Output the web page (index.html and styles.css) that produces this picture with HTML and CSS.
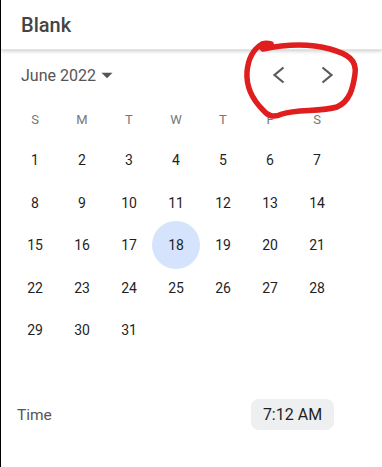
FILE: index.html
```html
<!DOCTYPE html>
<html lang="en">
<head>
<meta charset="utf-8">
<title>Blank</title>
<link rel="stylesheet" href="styles.css">
</head>
<body>
<div class="app">
  <header class="header">Blank</header>
  <div class="month-row">
    <button class="month-btn" type="button">June 2022
      <svg class="drop" width="24" height="24" viewBox="0 0 24 24"><path d="M6.5 9.8l5.5 5.5 5.5-5.5z" fill="#555"/></svg>
    </button>
    <div class="nav">
      <button class="nav-btn" type="button" aria-label="Previous month">
        <svg width="24" height="24" viewBox="0 0 24 24"><polyline points="16.5,4.5 7.5,12 16.5,19.5" fill="none" stroke="#5a5a5a" stroke-width="2.2"/></svg>
      </button>
      <button class="nav-btn" type="button" aria-label="Next month">
        <svg width="24" height="24" viewBox="0 0 24 24"><polyline points="7.5,4.5 16.5,12 7.5,19.5" fill="none" stroke="#5a5a5a" stroke-width="2.2"/></svg>
      </button>
    </div>
  </div>
  <div class="weekdays">
    <span>S</span><span>M</span><span>T</span><span>W</span><span>T</span><span>F</span><span>S</span>
  </div>
  <div class="days">
    <span>1</span><span>2</span><span>3</span><span>4</span><span>5</span><span>6</span><span>7</span>
    <span>8</span><span>9</span><span>10</span><span>11</span><span>12</span><span>13</span><span>14</span>
    <span>15</span><span>16</span><span>17</span><span class="selected">18</span><span>19</span><span>20</span><span>21</span>
    <span>22</span><span>23</span><span>24</span><span>25</span><span>26</span><span>27</span><span>28</span>
    <span>29</span><span>30</span><span>31</span>
  </div>
  <div class="time-row">
    <span class="time-label">Time</span>
    <span class="time-chip">7:12 AM</span>
  </div>
  <svg class="scribble" width="382" height="467" viewBox="0 0 382 467">
    <path d="M271 44 C 264 42, 258 45, 263 49 C 282 45, 308 43, 330 49 C 348 54, 357 60, 355 74 C 353 88, 350 101, 337 107 C 320 112, 297 109, 282 114 C 273 118, 268 116, 263 110 C 253 100, 246 88, 247 72 C 248 60, 252 50, 262 44" fill="none" stroke="#e01e1e" stroke-width="5.5" stroke-linecap="round" stroke-linejoin="round"/>
  </svg>
</div>
</body>
</html>
```

FILE: styles.css
```css
html, body {
  margin: 0;
  padding: 0;
  background: #fff;
}

body {
  font-family: Roboto, "Noto Sans", "Liberation Sans", sans-serif;
}

.app {
  position: relative;
  box-sizing: border-box;
  width: 382px;
  min-height: 467px;
  border-left: 1px solid #000;
  overflow: hidden;
}

.header {
  height: 50px;
  display: flex;
  align-items: center;
  padding-left: 20px;
  font-size: 20px;
  font-weight: 500;
  color: #444;
  box-shadow: 0 1px 4px rgba(0, 0, 0, 0.22);
  border-bottom: 1px solid #e4e4e4;
  box-sizing: border-box;
  position: relative;
}

.month-row {
  height: 50px;
  display: flex;
  align-items: center;
  justify-content: space-between;
  padding-left: 20px;
  padding-right: 31px;
}

.month-btn {
  display: flex;
  align-items: center;
  border: 0;
  background: none;
  padding: 0;
  font-family: inherit;
  font-size: 16px;
  color: #555;
  cursor: pointer;
}

.drop {
  margin-left: -1px;
}

.nav {
  display: flex;
}

.nav-btn {
  width: 48px;
  height: 48px;
  border: 0;
  background: none;
  padding: 0;
  display: flex;
  align-items: center;
  justify-content: center;
  cursor: pointer;
}

.weekdays,
.days {
  display: grid;
  grid-template-columns: repeat(7, 47px);
  padding-left: 10.5px;
}

.weekdays {
  height: 39px;
  align-items: center;
}

.weekdays span {
  text-align: center;
  font-size: 13px;
  color: #777;
}

.days {
  grid-auto-rows: 42.5px;
}

.days span {
  position: relative;
  display: flex;
  align-items: center;
  justify-content: center;
  font-size: 14px;
  color: #1f1f1f;
}

.days .selected::before {
  content: "";
  position: absolute;
  left: 50%;
  top: 50%;
  width: 48px;
  height: 48px;
  margin: -24px 0 0 -24px;
  border-radius: 50%;
  background: #d5e3fc;
  z-index: -1;
}

.days .selected {
  z-index: 0;
}

.time-row {
  display: flex;
  align-items: center;
  justify-content: space-between;
  margin-top: 47.75px;
  padding-left: 16px;
  padding-right: 48px;
}

.time-label {
  font-size: 15.5px;
  color: #555;
}

.time-chip {
  box-sizing: border-box;
  width: 83px;
  height: 31px;
  display: flex;
  align-items: center;
  justify-content: center;
  border-radius: 8px;
  background: #eeeff1;
  font-size: 16px;
  color: #1f1f1f;
}

.scribble {
  position: absolute;
  left: -1px;
  top: 0;
  pointer-events: none;
}
```
